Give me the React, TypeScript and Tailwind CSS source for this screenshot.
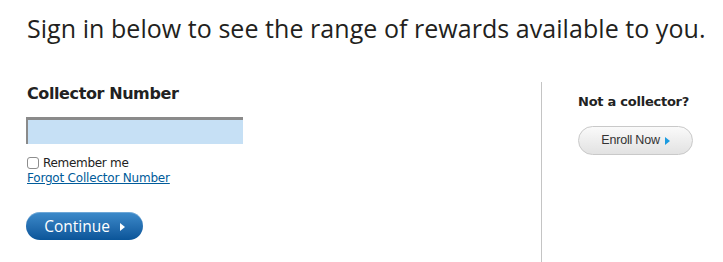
import React from 'react';

const Caret = ({ className = '' }: { className?: string }) => (
  <svg width="5" height="8" viewBox="0 0 5 8" className={className}>
    <path d="M0 0 L5 4 L0 8 Z" fill="currentColor" />
  </svg>
);

export default function App() {
  return (
    <div className="w-[723px] h-[262px] bg-white overflow-hidden font-['DejaVu_Sans',sans-serif] text-[#222]">
      <h1 className="pl-[27px] pt-[12px] h-[82px] text-[25px] leading-[32px] text-[#231f20] font-['Open_Sans',sans-serif] tracking-[0.05px]">
        Sign in below to see the range of rewards available to you.
      </h1>
      <div className="flex">
        <div className="w-[541px] pl-[26px]">
          <div className="pl-[1px] pt-[2px] text-[16px] leading-[20px] font-bold text-[#222] tracking-[-0.4px]">Collector Number</div>
          <input
            type="text"
            className="mt-[13px] block w-[217px] h-[27px] bg-[#c6e0f5] border-t-[3px] border-l-[2px] border-[#8a8a8a] outline-none"
          />
          <label className="mt-[12px] flex items-center gap-[4px] pl-[1px] text-[12px] leading-[14px] text-[#222] tracking-[-0.3px]">
            <span className="w-[12px] h-[12px] rounded-[3px] border border-[#8d8d8d] bg-white" />
            Remember me
          </label>
          <a href="#" className="block pl-[1px] text-[12px] leading-[16px] text-[#005b9a] underline tracking-[-0.2px]">
            Forgot Collector Number
          </a>
          <button className="mt-[26px] flex items-center justify-center gap-[10px] w-[117px] h-[28px] pt-[2px] rounded-full bg-gradient-to-b from-[#3d8bcb] to-[#0a5599] text-white text-[15.5px] font-['Open_Sans',sans-serif] shadow-[inset_0_1px_0_rgba(255,255,255,0.25)]">
            Continue
            <Caret />
          </button>
        </div>
        <div className="border-l border-[#c4c4c4] h-[180px] pl-[36px]">
          <div className="pt-[12px] text-[13px] leading-[16px] font-bold text-[#222] tracking-[-0.25px]">Not a collector?</div>
          <button className="mt-[16px] flex items-center justify-center gap-[5px] w-[115px] h-[29px] rounded-full border border-[#c9c9c9] bg-gradient-to-b from-[#fafafa] to-[#e2e2e2] text-[#333] text-[12.5px] font-['Liberation_Sans',sans-serif] tracking-[-0.2px]">
            Enroll Now
            <Caret className="text-[#1b9be0]" />
          </button>
        </div>
      </div>
    </div>
  );
}
